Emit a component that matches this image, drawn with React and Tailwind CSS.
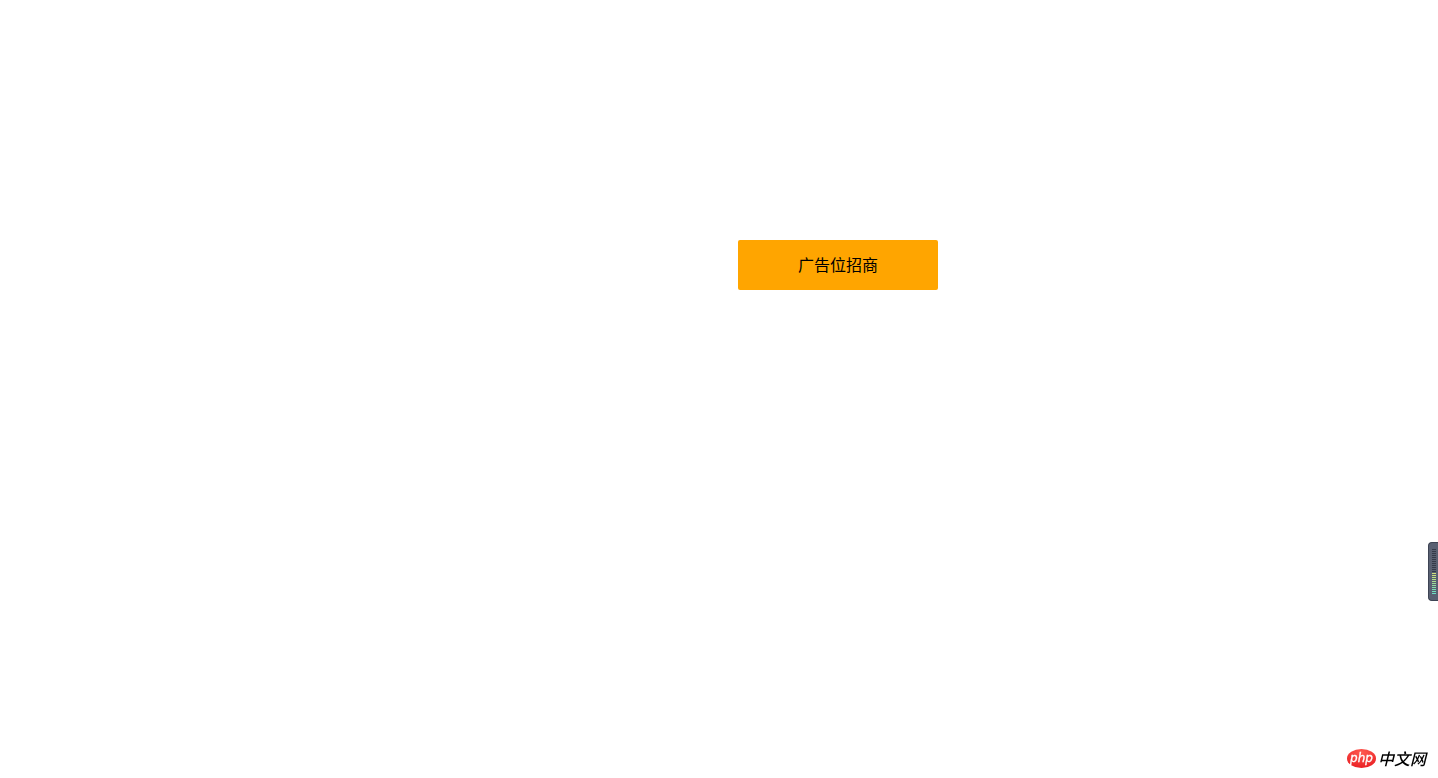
import React from 'react';

const idleBars = Array.from({ length: 12 }, (_, i) => i);

const activeBars = [
  'bg-[#d3e27c]',
  'bg-[#cbe27e]',
  'bg-[#c0e183]',
  'bg-[#b5e188]',
  'bg-[#a9e08f]',
  'bg-[#9de097]',
  'bg-[#91dfa0]',
  'bg-[#86dfa9]',
  'bg-[#7cdfb2]',
  'bg-[#73dfbc]',
  'bg-[#6cdfc5]',
];

const LevelMeter = () => (
  <div
    aria-hidden="true"
    className="fixed right-0 top-[542px] flex h-[59px] w-[10px] flex-col items-end gap-px rounded-l border border-r-0 border-[#3d4353] bg-[#596072] pr-[2px] pt-[6px]"
  >
    {idleBars.map((i) => (
      <span key={i} className="h-px w-1 shrink-0 bg-[#343a48]" />
    ))}
    {activeBars.map((color) => (
      <span key={color} className={`h-px w-1 shrink-0 ${color}`} />
    ))}
  </div>
);

const SiteLogo = () => (
  <div className="fixed bottom-[10px] right-3 flex items-start gap-[2px] font-['Noto_Sans_CJK_SC',sans-serif]">
    <svg width="29" height="19" viewBox="0 0 29 19" aria-hidden="true">
      <defs>
        <radialGradient id="badge" cx="50%" cy="20%" r="80%">
          <stop offset="0" stopColor="#ff5a50" />
          <stop offset="1" stopColor="#ea2024" />
        </radialGradient>
      </defs>
      <ellipse cx="14.5" cy="9.5" rx="14.5" ry="9.5" fill="url(#badge)" />
      <text
        x="14.5"
        y="12.5"
        textAnchor="middle"
        fontFamily="DejaVu Sans, sans-serif"
        fontSize="12"
        fontStyle="italic"
        fill="#fff"
        stroke="#fff"
        strokeWidth="0.3"
      >
        php
      </text>
    </svg>
    <span className="text-base font-medium italic leading-[18px] text-black">中文网</span>
  </div>
);

const App = () => {
  return (
    <div className="min-h-screen bg-white">
      <main className="flex justify-center pl-[238px] pt-60">
        <button
          type="button"
          className="h-[50px] w-[200px] rounded-xs bg-[#ffa500] pb-0.5 text-center font-['Noto_Sans_CJK_SC',sans-serif] text-base text-black"
        >
          广告位招商
        </button>
      </main>
      <LevelMeter />
      <SiteLogo />
    </div>
  );
};

export default App;
